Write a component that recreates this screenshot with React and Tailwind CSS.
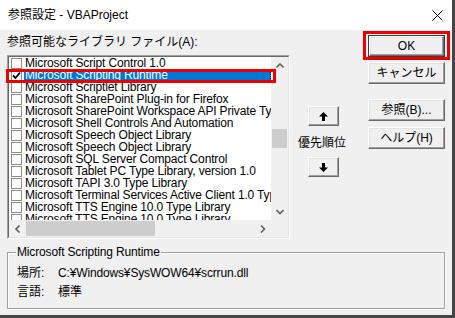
const items = [
  'Microsoft Script Control 1.0',
  'Microsoft Scripting Runtime',
  'Microsoft Scriptlet Library',
  'Microsoft SharePoint Plug-in for Firefox',
  'Microsoft SharePoint Workspace API Private Type Library',
  'Microsoft Shell Controls And Automation',
  'Microsoft Speech Object Library',
  'Microsoft Speech Object Library',
  'Microsoft SQL Server Compact Control',
  'Microsoft Tablet PC Type Library, version 1.0',
  'Microsoft TAPI 3.0 Type Library',
  'Microsoft Terminal Services Active Client 1.0 Type Library',
  'Microsoft TTS Engine 10.0 Type Library',
  'Microsoft TTS Engine 10.0 Type Library',
]

const font = "font-['Liberation_Sans','Noto_Sans_CJK_JP',sans-serif]"

function Chevron({ dir }) {
  const pts = {
    up: '0.5,4.5 4,1 7.5,4.5',
    down: '0.5,1 4,4.5 7.5,1',
    left: '4.5,0.5 1,4 4.5,7.5',
    right: '1,0.5 4.5,4 1,7.5',
  }[dir]
  const vertical = dir === 'up' || dir === 'down'
  return (
    <svg width={vertical ? 8 : 6} height={vertical ? 6 : 8} viewBox={vertical ? '0 0 8 6' : '0 0 6 8'}>
      <polyline points={pts} fill="none" stroke="#606060" strokeWidth="1.6" />
    </svg>
  )
}

function ArrowIcon({ down }) {
  return (
    <svg width="9" height="9" viewBox="0 0 9 9" style={{ transform: down ? 'rotate(180deg)' : undefined }}>
      <polygon points="4.5,0 9,4.5 6,4.5 6,9 3,9 3,4.5 0,4.5" fill="#000" />
    </svg>
  )
}

function Btn({ children, className = '' }) {
  return (
    <div
      className={`flex items-center justify-center bg-[#f0f0f0] border-t border-l border-white border-b border-r border-b-[#696969] border-r-[#696969] shadow-[inset_-1px_-1px_0_#a0a0a0,inset_1px_1px_0_#e3e3e3] text-[12px] text-black ${className}`}
    >
      {children}
    </div>
  )
}

function CheckBox({ checked }) {
  return (
    <div className="w-[11px] h-[11px] flex-shrink-0 bg-white border border-[#8a8a8a] flex items-center justify-center">
      {checked && (
        <svg width="9" height="9" viewBox="0 0 9 9">
          <polyline points="1,4.5 3.5,7 8,1.5" fill="none" stroke="#000" strokeWidth="1.8" />
        </svg>
      )}
    </div>
  )
}

export default function App() {
  return (
    <div className={`w-[455px] h-[318px] flex flex-col bg-[#f0f0f0] border-r-[3px] border-b-[3px] border-[#454545] overflow-hidden ${font}`}>
      {/* Title bar */}
      <div className="h-[30px] flex-shrink-0 bg-white flex items-center justify-between pl-[8px] pr-[9px]">
        <span className="text-[12px] text-black">参照設定 - VBAProject</span>
        <svg width="11" height="11" viewBox="0 0 11 11">
          <line x1="0.5" y1="0.5" x2="10.5" y2="10.5" stroke="#000" strokeWidth="1" />
          <line x1="10.5" y1="0.5" x2="0.5" y2="10.5" stroke="#000" strokeWidth="1" />
        </svg>
      </div>

      {/* Body */}
      <div className="flex-1 flex flex-col px-[7px] pt-[5px]">
        <div className="flex">
          {/* Left: label + list */}
          <div className="w-[283px] flex flex-col">
            <div className="h-[14px] leading-[14px] text-[12px] text-black mb-[6px]">参照可能なライブラリ ファイル(A):</div>
            <div className="relative w-[283px] h-[184px] border-t border-l border-[#a0a0a0] border-r border-b border-r-white border-b-white">
              <div className="w-full h-full border-t border-l border-[#696969] border-r border-b border-r-[#e3e3e3] border-b-[#e3e3e3] bg-white flex flex-col">
                <div className="flex flex-1 min-h-0">
                  <div className="flex-1 overflow-hidden">
                    {items.map((t, i) => (
                      <div key={i} className="h-[12px] flex items-center whitespace-nowrap pl-[2px] tracking-[-0.15px]">
                        <CheckBox checked={i === 1} />
                        {i === 1 ? (
                          <span className="ml-[2px] flex-1 h-[12px] leading-[12px] text-[12px] text-white bg-[#0078d7] pl-[1px] border-r border-dotted border-black">
                            {t}
                          </span>
                        ) : (
                          <span className="ml-[3px] h-[12px] leading-[12px] text-[12px] text-black">{t}</span>
                        )}
                      </div>
                    ))}
                  </div>
                  {/* Vertical scrollbar */}
                  <div className="w-[17px] bg-[#f0f0f0] flex flex-col">
                    <div className="h-[17px] flex items-center justify-center"><Chevron dir="up" /></div>
                    <div className="flex-1 relative">
                      <div className="absolute left-[1px] right-[1px] top-[55px] h-[19px] bg-[#cdcdcd]" />
                    </div>
                    <div className="h-[17px] flex items-center justify-center"><Chevron dir="down" /></div>
                  </div>
                </div>
                {/* Horizontal scrollbar */}
                <div className="h-[17px] flex bg-[#f0f0f0]">
                  <div className="w-[17px] flex items-center justify-center"><Chevron dir="left" /></div>
                  <div className="flex-1 relative">
                    <div className="absolute top-[1px] bottom-[1px] left-0 w-[129px] bg-[#cdcdcd]" />
                  </div>
                  <div className="w-[17px] flex items-center justify-center"><Chevron dir="right" /></div>
                  <div className="w-[17px]" />
                </div>
              </div>
              {/* red highlight */}
              <div className="absolute left-[-2px] top-[13px] w-[270px] h-[14px] border-[3px] border-[#ee0000] pointer-events-none" />
            </div>
          </div>

          {/* Middle: priority */}
          <div className="w-[47px] ml-[8px] flex flex-col">
            <Btn className="mt-[71px] ml-[10px] w-[31px] h-[20px]"><ArrowIcon /></Btn>
            <div className="mt-[10px] h-[14px] leading-[14px] text-[12px] text-black whitespace-nowrap">優先順位</div>
            <Btn className="mt-[7px] ml-[10px] w-[31px] h-[20px]"><ArrowIcon down /></Btn>
          </div>

          {/* Right: buttons */}
          <div className="ml-auto w-[77px] flex flex-col">
            <div className="relative">
              <div className="border border-[#3c3c3c]">
                <Btn className="h-[20px]">OK</Btn>
              </div>
              <div className="absolute -left-[5px] -right-[5px] -top-[4px] -bottom-[3px] border-[3px] border-[#ee0000] pointer-events-none" />
            </div>
            <Btn className="mt-[5px] h-[22px]">キャンセル</Btn>
            <Btn className="mt-[15px] h-[22px]">参照(B)...</Btn>
            <Btn className="mt-[6px] h-[22px]">ヘルプ(H)</Btn>
          </div>
        </div>

        {/* Group box */}
        <div className="relative mt-[13px] h-[57px] border border-[#a0a0a0] shadow-[inset_1px_1px_0_#fff,1px_1px_0_#fff]">
          <span className="absolute -top-[8px] left-[8px] px-[1px] bg-[#f0f0f0] h-[14px] leading-[14px] text-[12px] text-black whitespace-nowrap tracking-[-0.15px]">
            Microsoft Scripting Runtime
          </span>
          <div className="pt-[13px] pl-[9px] flex flex-col gap-[5px] text-[12px] text-black">
            <div className="flex h-[14px] leading-[14px]">
              <span className="w-[41px]">場所:</span>
              <span className="tracking-[-0.15px]">C:¥Windows¥SysWOW64¥scrrun.dll</span>
            </div>
            <div className="flex h-[14px] leading-[14px]">
              <span className="w-[41px]">言語:</span>
              <span>標準</span>
            </div>
          </div>
        </div>
      </div>
    </div>
  )
}
